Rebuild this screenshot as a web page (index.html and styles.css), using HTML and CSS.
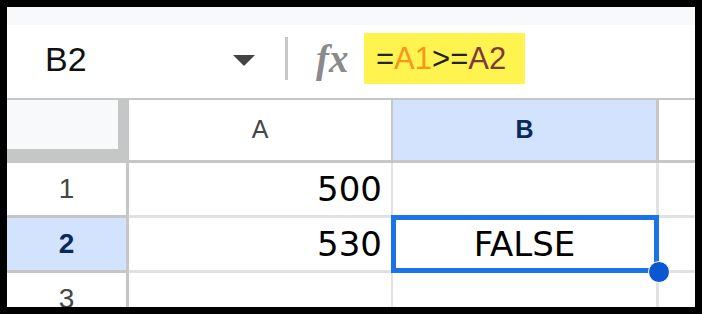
FILE: index.html
```html
<!DOCTYPE html>
<html lang="en">
<head>
  <meta charset="UTF-8" />
  <title>Sheet - B2</title>
  <meta name="viewport" content="width=device-width, initial-scale=1.0" />
  <link rel="stylesheet" href="styles.css">
</head>
<body>
  <div class="frame">
    <div class="top-strip"></div>
    <div class="toolbar">
      <div class="name-box">
        <span class="name-ref">B2</span>
        <span class="caret"></span>
      </div>
      <div class="divider"></div>
      <span class="fx">fx</span>
      <div class="formula">=<span class="ref-a1">A1</span>&gt;=<span class="ref-a2">A2</span></div>
    </div>

    <div class="grid">
      <div class="corner"></div>
      <div class="col-head">A</div>
      <div class="col-head active">B</div>
      <div class="col-head edge"></div>

      <div class="row-head">1</div>
      <div class="cell num">500</div>
      <div class="cell"></div>
      <div class="cell edge"></div>

      <div class="row-head active">2</div>
      <div class="cell num">530</div>
      <div class="cell center selected">
        FALSE
        <span class="handle"></span>
      </div>
      <div class="cell edge"></div>

      <div class="row-head">3</div>
      <div class="cell num"></div>
      <div class="cell"></div>
      <div class="cell edge"></div>
    </div>
  </div>
</body>
</html>
```

FILE: styles.css
```css
body {
  margin: 0;
  padding: 7px;
  background-color: #000;
  font-family: 'Liberation Sans', Arial, sans-serif;
}
.frame {
  width: 688px;
  height: 300px;
  background: #fff;
  overflow: hidden;
}
.top-strip {
  height: 18px;
  background: #f8f9fa;
}
.toolbar {
  height: 73px;
  border-bottom: 2px solid #c4c7c5;
  display: flex;
  align-items: center;
}
.name-box {
  width: 248px;
  display: flex;
  align-items: center;
  padding-left: 38px;
  box-sizing: border-box;
}
.name-ref {
  font-size: 34px;
  color: #111;
  flex: 1;
  margin-top: -4px;
}
.caret {
  width: 0;
  height: 0;
  border-left: 11px solid transparent;
  border-right: 11px solid transparent;
  border-top: 11px solid #444;
  margin-top: -2px;
}
.divider {
  width: 3px;
  height: 43px;
  background: #c7c7c7;
  margin-left: 30px;
  margin-bottom: 6px;
}
.fx {
  width: 36px;
  font-family: 'Liberation Serif', 'Times New Roman', serif;
  font-style: italic;
  font-weight: bold;
  font-size: 39px;
  color: #8a8a8a;
  margin-left: 28px;
  margin-top: -6px;
}
.formula {
  margin-left: 12px;
  margin-bottom: 7px;
  height: 51px;
  width: 161px;
  box-sizing: border-box;
  padding-left: 12px;
  background: #fff350;
  font-size: 31px;
  line-height: 51px;
  color: #222;
}
.ref-a1 {
  color: #f7961c;
}
.ref-a2 {
  color: #7e3a3a;
}

.grid {
  display: grid;
  grid-template-columns: 122px 264px 266px 36px;
  grid-template-rows: 63px 55px 55px 55px;
}
.corner {
  background: #f8f9fa;
  border-right: 11px solid #c4c7c5;
  border-bottom: 14px solid #c4c7c5;
}
.col-head {
  border-bottom: 3px solid #c4c7c5;
  border-right: 2px solid #c4c7c5;
  display: flex;
  align-items: center;
  justify-content: center;
  font-size: 25px;
  color: #444746;
  padding-bottom: 2px;
}
.col-head.active {
  background: #d3e3fd;
  border-right-width: 3px;
  font-weight: bold;
  color: #0a2a5c;
}
.col-head.edge {
  border-right: none;
}
.row-head {
  border-right: 3px solid #c4c7c5;
  border-bottom: 3px solid #c4c7c5;
  display: flex;
  align-items: center;
  justify-content: center;
  font-size: 28px;
  color: #444746;
}
.row-head.active {
  background: #d3e3fd;
  font-weight: bold;
  color: #0a2a5c;
}
.cell {
  position: relative;
  border-right: 2px solid #e1e1e1;
  border-bottom: 3px solid #e1e1e1;
  font-family: 'DejaVu Sans', Verdana, sans-serif;
  font-size: 34px;
  color: #000;
  display: flex;
  align-items: center;
}
.cell:nth-child(4n+3) {
  border-right-width: 3px;
}
.cell.edge {
  border-right: none;
}
.cell.num {
  justify-content: flex-end;
  padding-right: 9px;
}
.cell.center {
  justify-content: center;
}
.selected::after {
  content: "";
  position: absolute;
  top: -3px;
  left: -2px;
  right: -3px;
  bottom: -3px;
  border: 5px solid #1a73e8;
}
.handle {
  position: absolute;
  right: -14px;
  bottom: -13px;
  width: 20px;
  height: 20px;
  border-radius: 50%;
  background: #0b57d0;
  border: 1px solid #fff;
  z-index: 2;
}
```
